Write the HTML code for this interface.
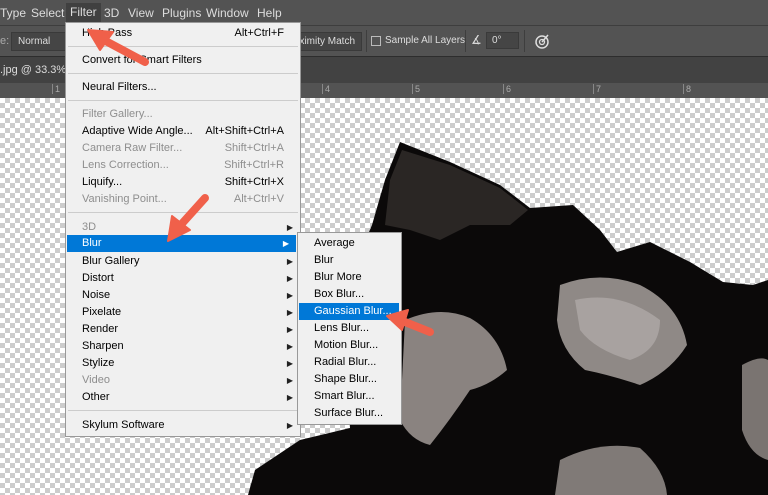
<!DOCTYPE html><html><head><style>
*{margin:0;padding:0;box-sizing:border-box}
body{width:768px;height:495px;overflow:hidden;position:relative;font-family:"Liberation Sans",sans-serif;font-size:11px;background:#fff}
.bar{position:absolute;left:0;width:768px}
.mb{top:0;height:25px;background:#535353;color:#ddd;font-size:12px}
.mb span{position:absolute;top:6px}
.ob{top:25px;height:31px;background:#535353;border-top:1px solid #3e3e3e;color:#ddd}
.tb{top:56px;height:27px;background:#424242;border-top:1px solid #2d2d2d}
.ru{top:83px;height:15px;background:#535353;color:#aaa;font-size:9px}
.cv{top:98px;height:397px;background-color:#fff;background-image:linear-gradient(45deg,#ccc 25%,transparent 25%,transparent 75%,#ccc 75%),linear-gradient(45deg,#ccc 25%,transparent 25%,transparent 75%,#ccc 75%);background-size:10px 10px;background-position:0 0,5px 5px}
.menu{position:absolute;background:#f0f0f0;border:1px solid #999;color:#000;font-size:11px}
.it{position:absolute;left:16px;height:17px;line-height:17px;right:0}
.it .k{position:absolute;right:16px}
.dis{color:#8e8e8e}
.sep{position:absolute;left:2px;right:2px;height:1px;background:#ccc}
.ar{position:absolute;right:7px;font-size:8px;color:#222}
.hl{background:#0078d7;color:#fff}
</style></head><body>
<div class="bar mb"><span style="left:0">Type</span><span style="left:31px">Select</span><span style="background:#404040;padding:0 4px;top:3px;height:19px;line-height:19px;left:66px">Filter</span><span style="left:104px">3D</span><span style="left:128px">View</span><span style="left:162px">Plugins</span><span style="left:206px">Window</span><span style="left:257px">Help</span></div>
<div class="bar ob">
<span style="position:absolute;left:0;top:9px;color:#aaa">e:</span>
<div style="position:absolute;left:11px;top:6px;width:55px;height:19px;background:#454545;border:1px solid #3a3a3a;padding:3px 6px;font-size:10px">Normal</div>
<div style="position:absolute;left:290px;top:6px;width:72px;height:19px;background:#454545;border:1px solid #3a3a3a;padding:3px 6px;font-size:10px;text-align:right">ximity Match</div>
<div style="position:absolute;left:366px;top:4px;width:1px;height:22px;background:#3e3e3e"></div>
<div style="position:absolute;left:371px;top:10px;width:10px;height:10px;border:1px solid #bbb"></div>
<span style="position:absolute;left:385px;top:9px;font-size:10px">Sample All Layers</span>
<div style="position:absolute;left:465px;top:4px;width:1px;height:22px;background:#3e3e3e"></div>
<span style="position:absolute;left:471px;top:7px;font-size:12px">∡</span>
<div style="position:absolute;left:486px;top:6px;width:33px;height:17px;background:#454545;border:1px solid #3a3a3a;padding:2px 5px;font-size:10px">0°</div>
<div style="position:absolute;left:524px;top:4px;width:1px;height:22px;background:#3e3e3e"></div>
<svg style="position:absolute;left:533px;top:6px" width="18" height="18"><circle cx="9" cy="10" r="6" fill="none" stroke="#ddd" stroke-width="1.5"/><circle cx="9" cy="10" r="2.5" fill="none" stroke="#ddd" stroke-width="1.3"/><path d="M9 10 L15 3" stroke="#ddd" stroke-width="1.5"/></svg>
</div>
<div class="bar tb"><span style="position:absolute;left:0;top:7px;color:#ddd;font-size:11px">.jpg @ 33.3%</span></div>
<div class="bar ru"><span style="position:absolute;left:52px;top:1px;border-left:1px solid #888;padding-left:2px">1</span><span style="position:absolute;left:322px;top:1px;border-left:1px solid #888;padding-left:2px">4</span><span style="position:absolute;left:412px;top:1px;border-left:1px solid #888;padding-left:2px">5</span><span style="position:absolute;left:503px;top:1px;border-left:1px solid #888;padding-left:2px">6</span><span style="position:absolute;left:593px;top:1px;border-left:1px solid #888;padding-left:2px">7</span><span style="position:absolute;left:683px;top:1px;border-left:1px solid #888;padding-left:2px">8</span></div>
<div class="bar cv"></div>
<svg style="position:absolute;left:0;top:0" width="768" height="495">
<path d="M400 142 L420 150 L450 162 L500 185 L530 208 L573 205 L600 230 L617 252 L650 242 L690 262 L723 282 L753 285 L768 280 L768 495 L248 495 L255 470 L300 440 L350 428 L340 300 L372 225 L385 180 Z" fill="#0b0909"/>
<path d="M402 150 L450 165 L500 188 L528 210 L510 225 L470 225 L440 240 L410 230 L385 225 L390 180 Z" fill="#2a2624"/>
<path d="M405 320 Q440 305 470 318 Q500 335 507 370 Q490 385 470 390 Q450 420 430 445 Q410 440 400 420 Z" fill="#8a8380"/>
<path d="M560 285 Q600 270 640 285 Q680 305 687 345 Q670 372 640 385 Q610 375 585 370 Q560 350 557 320 Z" fill="#8f8986"/>
<path d="M575 300 Q620 290 660 320 Q660 350 630 360 Q595 350 580 330 Z" fill="#a8a2a0"/>
<path d="M560 460 Q600 440 640 448 Q665 470 667 495 L555 495 Z" fill="#807a77"/>
<path d="M742 365 Q760 355 768 360 L768 460 Q750 455 742 430 Z" fill="#7a7471"/>
</svg>
<div class="menu" style="left:65px;top:22px;width:236px;height:415px">
<div class="it" style="top:2px">High Pass<span class="k">Alt+Ctrl+F</span></div>
<div class="sep" style="top:23px"></div>
<div class="it" style="top:29px">Convert for Smart Filters</div>
<div class="sep" style="top:50px"></div>
<div class="it" style="top:56px">Neural Filters...</div>
<div class="sep" style="top:77px"></div>
<div class="it dis" style="top:83px">Filter Gallery...</div>
<div class="it" style="top:100px">Adaptive Wide Angle...<span class="k">Alt+Shift+Ctrl+A</span></div>
<div class="it dis" style="top:117px">Camera Raw Filter...<span class="k">Shift+Ctrl+A</span></div>
<div class="it dis" style="top:134px">Lens Correction...<span class="k">Shift+Ctrl+R</span></div>
<div class="it" style="top:151px">Liquify...<span class="k">Shift+Ctrl+X</span></div>
<div class="it dis" style="top:168px">Vanishing Point...<span class="k">Alt+Ctrl+V</span></div>
<div class="sep" style="top:189px"></div>
<div class="it dis" style="top:196px">3D<span class="ar">▶</span></div>
<div class="it hl" style="top:212px;left:1px;right:4px;padding-left:15px">Blur<span class="ar" style="color:#fff">▶</span></div>
<div class="it" style="top:230px">Blur Gallery<span class="ar">▶</span></div>
<div class="it" style="top:247px">Distort<span class="ar">▶</span></div>
<div class="it" style="top:264px">Noise<span class="ar">▶</span></div>
<div class="it" style="top:281px">Pixelate<span class="ar">▶</span></div>
<div class="it" style="top:298px">Render<span class="ar">▶</span></div>
<div class="it" style="top:315px">Sharpen<span class="ar">▶</span></div>
<div class="it" style="top:332px">Stylize<span class="ar">▶</span></div>
<div class="it dis" style="top:349px">Video<span class="ar">▶</span></div>
<div class="it" style="top:366px">Other<span class="ar">▶</span></div>
<div class="sep" style="top:387px"></div>
<div class="it" style="top:394px">Skylum Software<span class="ar">▶</span></div>
</div>
<div class="menu" style="left:297px;top:232px;width:105px;height:193px">
<div class="it" style="top:2px">Average</div>
<div class="it" style="top:19px">Blur</div>
<div class="it" style="top:36px">Blur More</div>
<div class="it" style="top:53px">Box Blur...</div>
<div class="it hl" style="top:70px;left:1px;right:2px;padding-left:15px">Gaussian Blur...</div>
<div class="it" style="top:87px">Lens Blur...</div>
<div class="it" style="top:104px">Motion Blur...</div>
<div class="it" style="top:121px">Radial Blur...</div>
<div class="it" style="top:138px">Shape Blur...</div>
<div class="it" style="top:155px">Smart Blur...</div>
<div class="it" style="top:172px">Surface Blur...</div>
</div>
<svg style="position:absolute;left:0;top:0" width="768" height="495">
<g fill="#f0604a" stroke="#f0604a" stroke-linecap="round">
<path d="M145 62 L100 38" stroke-width="8"/><polygon points="88,30 113,32 100,50" stroke-width="2" stroke-linejoin="round"/>
<path d="M205 198 L178 228" stroke-width="8"/><polygon points="168,241 172,216 190,230" stroke-width="2" stroke-linejoin="round"/>
<path d="M430 332 L400 320" stroke-width="8"/><polygon points="387,316 408,310 402,330" stroke-width="2" stroke-linejoin="round"/>
</g></svg>
</body></html>
